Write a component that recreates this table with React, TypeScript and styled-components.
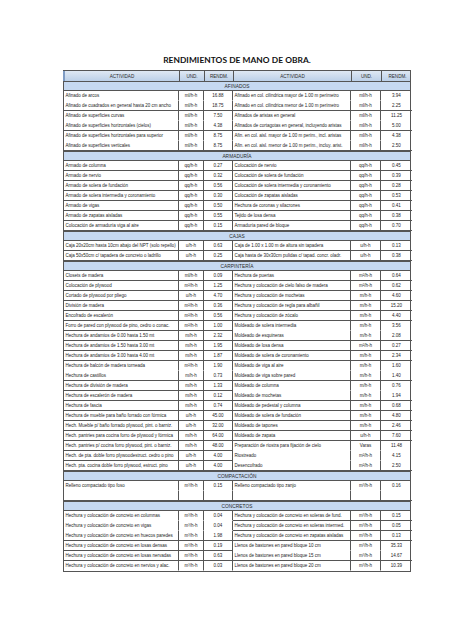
import React from 'react';
import styled, { createGlobalStyle } from 'styled-components';

const Global = createGlobalStyle`
  html, body { margin: 0; padding: 0; background: #ffffff; }
  * { box-sizing: border-box; }
`;

const COLS = '115px 25px 29px 118px 30px 31px';
const LINE = '#555555';

const Page = styled.div`
  width: 474px;
  height: 632px;
  padding-top: 54px;
  display: flex;
  flex-direction: column;
  align-items: center;
  font-family: 'Liberation Sans', Arial, sans-serif;
  color: #1c1c1c;
`;

const Title = styled.h1`
  margin: 0;
  height: 16px;
  font-family: Lato, 'Liberation Sans', sans-serif;
  font-weight: 700;
  font-size: 8.4px;
  line-height: 12px;
  color: #111;
  letter-spacing: 0.05px;
`;

const Table = styled.div`
  width: 348px;
  border: 1px solid ${LINE};
  display: flex;
  flex-direction: column;
`;

const Row = styled.div`
  display: grid;
  grid-template-columns: ${COLS};
  height: 10px;
`;

const HeaderRow = styled(Row)`
  background: linear-gradient(#dfe8f3, #bcd0e8);
  border-left: 2px solid #7f9cc4;
  margin-left: -1px;
  height: 10px;
`;

const HeadCell = styled.div<{ $last?: boolean }>`
  display: flex;
  align-items: center;
  justify-content: center;
  font-size: 4.6px;
  color: #2a2a2a;
  border-right: ${(p) => (p.$last ? 'none' : `1.5px solid ${LINE}`)};
  white-space: nowrap;
`;

const Section = styled.div`
  height: 10px;
  background: #c6d9f1;
  border-top: 1px solid ${LINE};
  border-bottom: 1px solid ${LINE};
  display: flex;
  align-items: center;
  justify-content: center;
  font-size: 4.8px;
  color: #2a2a2a;
  letter-spacing: 0.05px;
`;

const Cell = styled.div<{ $align?: 'left' | 'center'; $line?: boolean; $last?: boolean; $thick?: boolean }>`
  display: flex;
  align-items: center;
  justify-content: ${(p) => (p.$align === 'left' ? 'flex-start' : 'center')};
  padding: 0 1.5px;
  font-size: 4.5px;
  white-space: nowrap;
  overflow: hidden;
  border-bottom: ${(p) => (p.$line ? `1px solid ${LINE}` : '1px solid transparent')};
  border-right: ${(p) => (p.$last ? 'none' : p.$thick ? `1.5px solid ${LINE}` : `1px solid ${LINE}`)};
`;

type R = [string, string, string, string, string, string, boolean?, boolean?];
type Block = { title?: string; rows: R[] };

const blocks: Block[] = [
  {
    title: 'AFINADOS',
    rows: [
      ['Afinado de arcos', 'ml/h-h', '16.88', 'Afinado en col. cilíndrica mayor de 1.00 m perímetro', 'ml/h-h', '3.94', false, false],
      ['Afinado de cuadrados en general hasta 20 cm ancho', 'ml/h-h', '18.75', 'Afinado en col. cilíndrica menor de 1.00 m perímetro', 'ml/h-h', '2.25'],
      ['Afinado de superficies curvas', 'ml/h-h', '7.50', 'Afinados de aristas en general', 'ml/h-h', '11.25', false, false],
      ['Afinado de superficies horizontales (cielos)', 'ml/h-h', '4.38', 'Afinados de cortagotas en general, incluyendo aristas', 'ml/h-h', '5.00'],
      ['Afinado de superficies horizontales para superior', 'ml/h-h', '8.75', 'Afin. en col. aisl. mayor de 1.00 m perím., incl. aristas', 'ml/h-h', '4.38', false, false],
      ['Afinado de superficies verticales', 'ml/h-h', '8.75', 'Afin. en col. aisl. menor de 1.00 m perím., incluy. arist.', 'ml/h-h', '2.50'],
    ],
  },
  {
    title: 'ARMADURÍA',
    rows: [
      ['Armado de columna', 'qq/h-h', '0.27', 'Colocación de nervio', 'qq/h-h', '0.45'],
      ['Armado de nervio', 'qq/h-h', '0.32', 'Colocación de solera de fundación', 'qq/h-h', '0.39'],
      ['Armado de solera de fundación', 'qq/h-h', '0.56', 'Colocación de solera intermedia y coronamiento', 'qq/h-h', '0.28'],
      ['Armado de solera intermedia y coronamiento', 'qq/h-h', '0.30', 'Colocación de zapatas aisladas', 'qq/h-h', '0.53'],
      ['Armado de vigas', 'qq/h-h', '0.50', 'Hechura de coronas y silacrones', 'qq/h-h', '0.41'],
      ['Armado de zapatas aisladas', 'qq/h-h', '0.55', 'Tejido de losa densa', 'qq/h-h', '0.38'],
      ['Colocación de armaduría viga al aire', 'qq/h-h', '0.15', 'Armaduría pared de bloque', 'qq/h-h', '0.70'],
    ],
  },
  {
    title: 'CAJAS',
    rows: [
      ['Caja 20x20cm hasta 10cm abajo del NPT (solo repello)', 'u/h-h', '0.63', 'Caja de 1.00 x 1.00 m de altura sin tapadera', 'u/h-h', '0.13'],
      ['Caja 50x50cm c/ tapadera de concreto o ladrillo', 'u/h-h', '0.25', 'Caja hasta de 30x30cm pulidas c/ tapad. concr. oladr.', 'u/h-h', '0.38'],
    ],
  },
  {
    title: 'CARPINTERÍA',
    rows: [
      ['Closets de madera', 'ml/h-h', '0.09', 'Hechura de puertas', 'm²/h-h', '0.64'],
      ['Colocación de plywood', 'm²/h-h', '1.25', 'Hechura y colocación de cielo falso de madera', 'm²/h-h', '0.62'],
      ['Cortado de plywood por pliego', 'u/h-h', '4.70', 'Hechura y colocación de mochetas', 'm/h-h', '4.60'],
      ['División de madera', 'm²/h-h', '0.36', 'Hechura y colocación de regla para albañil', 'm/h-h', '15.20'],
      ['Encofrado de escalerón', 'm²/h-h', '0.56', 'Hechura y colocación de zócalo', 'm/h-h', '4.40'],
      ['Forro de pared con plywood de pino, cedro o conac.', 'm²/h-h', '1.00', 'Moldeado de solera intermedia', 'm/h-h', '3.56', true, false],
      ['Hechura de andamios de 0.00 hasta 1.50 mt', 'm/h-h', '2.32', 'Moldeado de esquineras', 'm/h-h', '2.08'],
      ['Hechura de andamios de 1.50 hasta 3.00 mt', 'm/h-h', '1.95', 'Moldeado de losa densa', 'm²/h-h', '0.27'],
      ['Hechura de andamios de 3.00 hasta 4.00 mt', 'm/h-h', '1.87', 'Moldeado de solera de coronamiento', 'm/h-h', '2.34'],
      ['Hechura de balcón de madera torneada', 'm²/h-h', '1.90', 'Moldeado de viga al aire', 'm/h-h', '1.60', false, false],
      ['Hechura de castillos', 'm/h-h', '0.73', 'Moldeado de viga sobre pared', 'm/h-h', '1.40'],
      ['Hechura de división de madera', 'm/h-h', '1.33', 'Moldeado de columna', 'm/h-h', '0.76', true, false],
      ['Hechura de escalerón de madera', 'm/h-h', '0.12', 'Moldeado de mochetas', 'm/h-h', '1.94'],
      ['Hechura de fascia', 'm/h-h', '0.74', 'Moldeado de pedestal y columna', 'm/h-h', '0.68'],
      ['Hechura de mueble para baño forrado con fórmica', 'u/h-h', '45.00', 'Moldeado de solera de fundación', 'm/h-h', '4.80'],
      ['Hech. Mueble p/ baño forrado plywood, pint. o barniz.', 'u/h-h', '32.00', 'Moldeado de tapones', 'm/h-h', '2.46'],
      ['Hech. pantries para cocina forro de plywood y fórmica', 'm/h-h', '64.00', 'Moldeado de zapata', 'u/h-h', '7.60'],
      ['Hech. pantries p/ cocina forro plywood, pint. o barniz.', 'm/h-h', '48.00', 'Preparación de riostra para fijación de cielo', 'Varas', '11.48', true, false],
      ['Hech. de pta. doble forro plywoodestruct. cedro o pino', 'u/h-h', '4.00', 'Riostreado', 'm²/h-h', '4.15', true, false],
      ['Hech. pta. cocina doble forro plywood, estruct. pino', 'u/h-h', '4.00', 'Desencofrado', 'm²/h-h', '2.50'],
    ],
  },
  {
    title: 'COMPACTACIÓN',
    rows: [
      ['Relleno compactado tipo foso', 'm³/h-h', '0.15', 'Relleno compactado tipo zanjo', 'm³/h-h', '0.16', false, false],
      ['', '', '', '', '', ''],
    ],
  },
  {
    title: 'CONCRETOS',
    rows: [
      ['Hechura y colocación de concreto en columnas', 'm³/h-h', '0.04', 'Hechura y colocación de concreto en soleras de fund.', 'm³/h-h', '0.15', false, true],
      ['Hechura y colocación de concreto en vigas', 'm³/h-h', '0.04', 'Hechura y colocación de concreto en soleras intermed.', 'm³/h-h', '0.05', false, true],
      ['Hechura y colocación de concreto en huecos paredes', 'm³/h-h', '1.98', 'Hechura y colocación de concreto en zapatas aisladas', 'm³/h-h', '0.13'],
      ['Hechura y colocación de concreto en losas densas', 'm³/h-h', '0.19', 'Llenos de bastones en pared bloque 10 cm', 'm³/h-h', '35.33', true, false],
      ['Hechura y colocación de concreto en losas nervadas', 'm³/h-h', '0.63', 'Llenos de bastones en pared bloque 15 cm', 'm³/h-h', '14.67'],
      ['Hechura y colocación de concreto en nervios y alac.', 'm³/h-h', '0.03', 'Llenos de bastones en pared bloque 20 cm', 'm³/h-h', '10.39', false, false],
    ],
  },
];

const heads = ['ACTIVIDAD', 'UND.', 'RENDM.', 'ACTIVIDAD', 'UND.', 'RENDM.'];

export default function App() {
  return (
    <>
      <Global />
      <Page>
        <Title>RENDIMIENTOS DE MANO DE OBRA.</Title>
        <Table>
          <HeaderRow>
            {heads.map((h, i) => (
              <HeadCell key={i} $last={i === 5}>
                {h}
              </HeadCell>
            ))}
          </HeaderRow>
          {blocks.map((b) => (
            <React.Fragment key={b.title}>
              <Section>{b.title}</Section>
              {b.rows.map((r, i) => {
                const lL = r[6] !== false;
                const lR = r[7] !== false;
                return (
                  <Row key={i}>
                    <Cell $align="left" $line={lL}>{r[0]}</Cell>
                    <Cell $line={lL}>{r[1]}</Cell>
                    <Cell $line={lL} $thick>{r[2]}</Cell>
                    <Cell $align="left" $line={lR}>{r[3]}</Cell>
                    <Cell $line={lR}>{r[4]}</Cell>
                    <Cell $line={lR} $last>{r[5]}</Cell>
                  </Row>
                );
              })}
            </React.Fragment>
          ))}
        </Table>
      </Page>
    </>
  );
}
